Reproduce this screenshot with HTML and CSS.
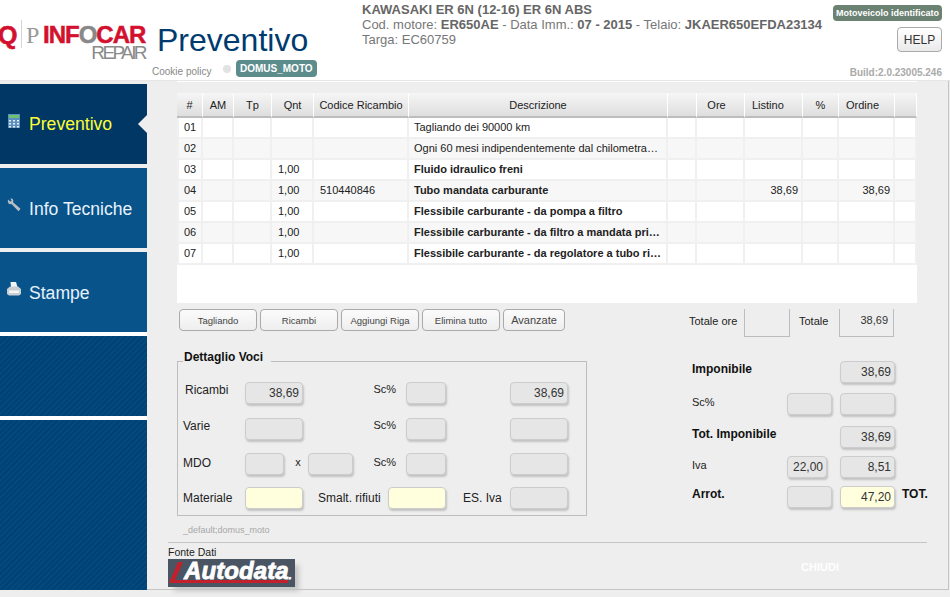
FILE: index.html
```html
<!DOCTYPE html>
<html lang="it">
<head>
    <meta charset="UTF-8">
    <title>Preventivo</title>
    <link rel="stylesheet" href="styles.css">
</head>
<body>
    <div class="page">
        <header class="header">
            <div class="brand">
                <div class="brand-top">
                    <div class="logo">
                        <div class="logo-main">
                            <span class="logo-q">Q</span>
                            <span class="logo-sep"></span>
                            <span class="logo-p">P</span>
                            <span class="logo-infocar">INF<span class="logo-o">O</span>CAR</span>
                        </div>
                        <div class="logo-repair">REPAIR</div>
                    </div>
                    <div class="page-title">Preventivo</div>
                </div>
                <div class="brand-sub">
                    <a class="cookie">Cookie policy</a>
                    <span class="dot"></span>
                    <span class="domus">DOMUS_MOTO</span>
                </div>
            </div>
            <div class="vehicle">
                <div><b>KAWASAKI ER 6N (12-16) ER 6N ABS</b></div>
                <div>Cod. motore: <b>ER650AE</b> - Data Imm.: <b>07 - 2015</b> - Telaio: <b>JKAER650EFDA23134</b></div>
                <div>Targa: EC60759</div>
            </div>
            <div class="status">
                <span class="identified">Motoveicolo identificato</span>
                <button class="help">HELP</button>
                <span class="build">Build:2.0.23005.246</span>
            </div>
        </header>

        <div class="body">
            <nav class="sidebar">
                <a class="menu-item active">
                    <svg class="menu-icon" viewBox="0 0 14 14">
                        <rect x="1" y="0" width="12" height="14" fill="#5b8fc0"/>
                        <rect x="2" y="1" width="10" height="3" fill="#6fc06a"/>
                        <path d="M2 6h2v1.5H2zM6 6h2v1.5H6zM10 6h2v1.5h-2zM2 9h2v1.5H2zM6 9h2v1.5H6zM10 9h2v1.5h-2zM2 12h2v1.5H2zM6 12h2v1.5H6zM10 12h2v1.5h-2z" fill="#e6eef6"/>
                    </svg>
                    <span>Preventivo</span>
                </a>
                <a class="menu-item">
                    <svg class="menu-icon" viewBox="0 0 14 14">
                        <path d="M1 1.5 3.2 3.6 4.6 2.8 3.4.6C5 .1 6.500 1 6.300 3L6 4.200 13.500 10.800 11.500 13.300 4.500 6 3 6.200C1.200 6 .4 3.500 1 1.500z" fill="#b9bec2"/>
                    </svg>
                    <span>Info Tecniche</span>
                </a>
                <a class="menu-item">
                    <svg class="menu-icon" viewBox="0 0 14 14">
                        <path d="M3.500 0 9 0 10.500 5 4 5z" fill="#f2f4f5"/>
                        <path d="M0 7 3 4.500H11L14 7V12L12 13.500H2L0 12z" fill="#c9ced2"/>
                        <rect x="2" y="8.500" width="10" height="2.500" fill="#f4f5f6"/>
                    </svg>
                    <span>Stampe</span>
                </a>
                <div class="menu-empty"></div>
                <div class="menu-empty menu-last"></div>
            </nav>

            <main class="content">
                <section class="grid-panel">
                    <table class="grid">
                        <colgroup>
                            <col class="c-num"><col class="c-am"><col class="c-tp"><col class="c-qnt"><col class="c-code">
                            <col class="c-desc"><col class="c-blank"><col class="c-ore"><col class="c-list"><col class="c-perc">
                            <col class="c-ord"><col class="c-last">
                        </colgroup>
                        <thead>
                            <tr>
                                <th>#</th><th>AM</th><th>Tp</th><th>Qnt</th><th>Codice Ricambio</th><th>Descrizione</th>
                                <th></th><th class="th-ore">Ore</th><th class="th-left">Listino</th><th>%</th><th class="th-left">Ordine</th><th></th>
                            </tr>
                        </thead>
                        <tbody>
                            <tr><td class="num">01</td><td></td><td></td><td></td><td></td><td class="desc">Tagliando dei 90000 km</td><td></td><td></td><td></td><td></td><td></td><td></td></tr>
                            <tr><td class="num">02</td><td></td><td></td><td></td><td></td><td class="desc">Ogni 60 mesi indipendentemente dal chilometraggio percorso</td><td></td><td></td><td></td><td></td><td></td><td></td></tr>
                            <tr class="part"><td class="num">03</td><td></td><td></td><td>1,00</td><td></td><td class="desc">Fluido idraulico freni</td><td></td><td></td><td></td><td></td><td></td><td></td></tr>
                            <tr class="part"><td class="num">04</td><td></td><td></td><td>1,00</td><td>510440846</td><td class="desc">Tubo mandata carburante</td><td></td><td></td><td class="money">38,69</td><td></td><td class="money">38,69</td><td></td></tr>
                            <tr class="part"><td class="num">05</td><td></td><td></td><td>1,00</td><td></td><td class="desc">Flessibile carburante - da pompa a filtro</td><td></td><td></td><td></td><td></td><td></td><td></td></tr>
                            <tr class="part"><td class="num">06</td><td></td><td></td><td>1,00</td><td></td><td class="desc">Flessibile carburante - da filtro a mandata principale</td><td></td><td></td><td></td><td></td><td></td><td></td></tr>
                            <tr class="part"><td class="num">07</td><td></td><td></td><td>1,00</td><td></td><td class="desc">Flessibile carburante - da regolatore a tubo ritorno</td><td></td><td></td><td></td><td></td><td></td><td></td></tr>
                        </tbody>
                    </table>
                </section>

                <section class="actions">
                    <div class="buttons">
                        <button class="btn">Tagliando</button>
                        <button class="btn">Ricambi</button>
                        <button class="btn">Aggiungi Riga</button>
                        <button class="btn">Elimina tutto</button>
                        <button class="btn btn-adv">Avanzate</button>
                    </div>
                    <div class="totals">
                        <span class="totals-label">Totale ore</span>
                        <div class="totals-box box-ore"></div>
                        <span class="totals-label label-tot">Totale</span>
                        <div class="totals-box box-tot">38,69</div>
                    </div>
                </section>

                <section class="lower">
                    <fieldset class="detail">
                        <legend>Dettaglio Voci</legend>
                        <div class="detail-grid">
                            <label class="lbl lbl-high lbl-ricambi">Ricambi</label>
                            <input class="field f-wide" readonly value="38,69">
                            <label class="lbl-sc">Sc%</label>
                            <input class="field f-sc" readonly>
                            <input class="field f-end" readonly value="38,69">

                            <label class="lbl lbl-high">Varie</label>
                            <input class="field f-wide" readonly>
                            <label class="lbl-sc">Sc%</label>
                            <input class="field f-sc" readonly>
                            <input class="field f-end" readonly>

                            <label class="lbl lbl-mdo">MDO</label>
                            <div class="mdo">
                                <input class="field f-hours" readonly>
                                <span class="times">x</span>
                                <input class="field f-rate" readonly>
                            </div>
                            <label class="lbl-sc lbl-sc-low">Sc%</label>
                            <input class="field f-sc" readonly>
                            <input class="field f-end" readonly>

                            <label class="lbl">Materiale</label>
                            <input class="field field-edit f-wide" readonly>
                            <label class="lbl lbl-smalt">Smalt. rifiuti</label>
                            <input class="field field-edit f-smalt" readonly>
                            <label class="lbl lbl-es">ES. Iva</label>
                            <input class="field f-end" readonly>
                        </div>
                    </fieldset>

                    <div class="summary">
                        <span class="sum-bold">Imponibile</span>
                        <input class="field f-total" readonly value="38,69">

                        <span class="sum-small">Sc%</span>
                        <input class="field f-mid" readonly>
                        <input class="field f-total" readonly>

                        <span class="sum-bold">Tot. Imponibile</span>
                        <input class="field f-total" readonly value="38,69">

                        <span class="sum-small">Iva</span>
                        <input class="field f-iva" readonly value="22,00">
                        <input class="field f-total" readonly value="8,51">

                        <span class="sum-bold">Arrot.</span>
                        <input class="field f-mid" readonly>
                        <input class="field field-edit f-total" readonly value="47,20">
                        <span class="sum-tot">TOT.</span>
                    </div>
                </section>

                <div class="profile-note">_default;domus_moto</div>

                <footer class="footer">
                    <div class="source">
                        <div class="source-label">Fonte Dati</div>
                        <div class="autodata">
                            <svg class="autodata-red" viewBox="0 0 127 28">
                                <path d="M10 3H15L7 21H120V24H1z" fill="#c2202c"/>
                            </svg>
                            <span class="autodata-text">Autodata<i>.</i></span>
                        </div>
                    </div>
                    <a class="close">CHIUDI</a>
                </footer>
            </main>
        </div>
    </div>
</body>
</html>
```

FILE: styles.css
```css
* {
    box-sizing: border-box;
}

html, body {
    margin: 0;
    padding: 0;
    height: 100%;
    overflow: hidden;
}

body {
    font-family: "Liberation Sans", Arial, sans-serif;
    font-size: 11px;
    color: #222;
    background: #eeeeee;
}

.page {
    width: 950px;
    height: 597px;
    display: flex;
    flex-direction: column;
}

/* header */
.header {
    height: 81px;
    flex: none;
    display: flex;
    background: #fff;
    border-bottom: 1px solid #e6e6e6;
}

.brand {
    flex: 0 0 362px;
    overflow: hidden;
}

.brand-top {
    height: 60px;
    display: flex;
    padding-top: 20px;
}

.logo {
    width: 147px;
    flex: none;
}

.logo-main {
    display: flex;
    align-items: flex-start;
    height: 25px;
    line-height: 20px;
}

.logo-q {
    width: 21px;
    margin-left: -2px;
    margin-top: 5px;
    font-size: 25px;
    font-weight: bold;
    color: #d3112e;
    -webkit-text-stroke: 0.6px #d3112e;
}

.logo-sep {
    width: 1px;
    height: 28px;
    margin-left: 2px;
    background: #d4d4d4;
}

.logo-p {
    width: 17px;
    margin-left: 4px;
    margin-top: 5px;
    font-family: "Liberation Serif", serif;
    font-size: 24px;
    color: #999;
}

.logo-infocar {
    margin-top: 5px;
    font-size: 24px;
    font-weight: bold;
    letter-spacing: -1px;
    color: #d3112e;
    -webkit-text-stroke: 0.5px #d3112e;
}

.logo-o {
    color: #888;
    -webkit-text-stroke: 0.5px #888;
}

.logo-repair {
    text-align: right;
    font-size: 19px;
    line-height: 15px;
    letter-spacing: -2.6px;
    color: #8a8a8a;
    padding-right: 2px;
}

.page-title {
    margin-left: 10px;
    font-size: 32px;
    line-height: 40px;
    color: #003b6f;
}

.brand-sub {
    display: flex;
    align-items: center;
    height: 17px;
    padding-left: 152px;
}

.cookie {
    width: 71px;
    padding-top: 5px;
    font-size: 10px;
    color: #888;
}

.dot {
    width: 8px;
    height: 8px;
    margin-right: 5px;
    border-radius: 50%;
    background: #e2e2e2;
}

.domus {
    height: 17px;
    padding: 0 4px;
    line-height: 17px;
    font-size: 10px;
    font-weight: bold;
    color: #fff;
    background: #5c8c8c;
    border-radius: 4px;
}

.vehicle {
    flex: 1;
    padding-top: 2px;
    font-size: 13px;
    line-height: 15px;
    white-space: nowrap;
    color: #777;
}

.vehicle b {
    color: #666;
}

.status {
    flex: none;
    display: flex;
    flex-direction: column;
    align-items: flex-end;
    padding: 5px 8px 0 0;
}

.identified {
    height: 16px;
    padding: 0 3px;
    line-height: 16px;
    font-size: 9px;
    font-weight: bold;
    color: #fff;
    background: #6b8272;
    border-radius: 4px;
}

.help {
    width: 45px;
    height: 25px;
    margin-top: 6px;
    padding: 0;
    font-family: inherit;
    font-size: 12px;
    color: #333;
    background: linear-gradient(#fff, #eaeaea);
    border: 1px solid #aaa;
    border-radius: 4px;
}

.build {
    margin-top: 15px;
    font-size: 10px;
    font-weight: bold;
    color: #aaa;
}

/* sidebar */
.body {
    flex: 1;
    display: flex;
    min-height: 0;
}

.sidebar {
    flex: 0 0 147px;
    display: flex;
    flex-direction: column;
    gap: 4px;
    height: 509px;
    padding-top: 3px;
}

.menu-item {
    position: relative;
    height: 80px;
    flex: none;
    display: flex;
    align-items: center;
    gap: 8px;
    padding-left: 7px;
    font-size: 17.6px;
    color: #e6f2fc;
    background: #09538b;
}

.menu-item span {
    padding-top: 2px;
}

.menu-item.active span {
    padding-top: 0;
}

.menu-item.active {
    color: #ffff33;
    background: #003764;
}

.menu-item.active::after {
    content: "";
    position: absolute;
    right: 0;
    top: 31px;
    border: 9px solid transparent;
    border-left: 0;
    border-right-color: #eeeeee;
}

.menu-icon {
    width: 14px;
    height: 14px;
    flex: none;
    margin-bottom: 6px;
}

.menu-empty {
    height: 84px;
    flex: none;
    margin-top: -4px;
    border-top: 4px solid #fff;
    background: repeating-linear-gradient(135deg, #004273 0, #004273 2px, #03497d 2px, #03497d 4px);
}

.menu-last {
    flex: 1;
}

/* main area */
.content {
    flex: 1;
    display: flex;
    flex-direction: column;
    height: 509px;
    margin-right: 1px;
    padding-left: 21px;
    border-right: 1px solid #c4c4c4;
    border-bottom: 1px solid #c4c4c4;
}

.grid-panel {
    width: 740px;
    height: 222px;
    flex: none;
    margin-left: 9px;
    padding-top: 11px;
    border-top: 1px solid #fff;
    background: linear-gradient(#eeeeee 11px, #fff 11px);
}

.grid {
    width: 740px;
    table-layout: fixed;
    border-collapse: separate;
    border-spacing: 0;
}

.c-num { width: 26px; }
.c-am { width: 31px; }
.c-tp { width: 38px; }
.c-qnt { width: 42px; }
.c-code { width: 95px; }
.c-desc { width: 259px; }
.c-blank { width: 29px; }
.c-ore { width: 48px; }
.c-list { width: 58px; }
.c-perc { width: 36px; }
.c-ord { width: 56px; }
.c-last { width: 22px; }

.grid th {
    height: 25px;
    padding: 0;
    font-weight: normal;
    color: #222;
    background: linear-gradient(#f6f6f6, #dedede);
    border-right: 1px solid #fff;
    border-bottom: 2px solid #bdbdbd;
}

.grid th.th-ore {
    padding-right: 8px;
}

.grid th.th-left {
    padding-left: 7px;
    text-align: left;
}

.grid td {
    height: 21px;
    padding: 0 0 1px 6px;
    white-space: nowrap;
    overflow: hidden;
    background: #fff;
    border-right: 2px solid #f0f0f0;
    border-bottom: 2px solid #f0f0f0;
}

.grid tbody tr:nth-child(even) td {
    background: #f7f7f7;
}

.grid td.num {
    padding: 0 0 1px 5px;
    border-left: 2px solid #f0f0f0;
}

.grid td.desc {
    padding: 0 3px 1px 5px;
    text-overflow: ellipsis;
}

.grid .part .desc {
    font-weight: bold;
}

.grid td.money {
    padding: 0 3px 1px 0;
    text-align: right;
}

.actions {
    display: flex;
    flex: none;
    width: 715px;
    height: 28px;
    margin: 6px 0 0 11px;
    justify-content: space-between;
}

.buttons {
    display: flex;
    gap: 3px;
}

.btn {
    width: 78px;
    height: 22px;
    padding: 0;
    font-family: inherit;
    font-size: 9.5px;
    color: #444;
    background: linear-gradient(#fbfbfb, #eeeeee);
    border: 1px solid #aaa;
    border-radius: 4px;
}

.btn-adv {
    width: 62px;
    font-size: 11px;
}

.totals {
    display: flex;
    height: 28px;
}

.totals-label {
    width: 55px;
    padding-top: 6px;
    font-size: 11px;
    color: #222;
}

.label-tot {
    width: 49px;
    padding-left: 9px;
}

.totals-box {
    border: 1px solid #bdbdbd;
    border-top: 0;
}

.box-ore {
    width: 46px;
}

.box-tot {
    width: 55px;
    padding: 5px 5px 0 0;
    text-align: right;
    color: #333;
}

.lower {
    display: flex;
    flex: none;
    margin: 13px 0 0 9px;
}

.detail {
    width: 410px;
    margin: 0;
    padding: 10px 0 5px;
    border: 1px solid #bdbdbd;
}

.detail legend {
    margin-left: 5px;
    padding: 0 8px 8px 1px;
    font-size: 12px;
    line-height: 14px;
    font-weight: bold;
    color: #111;
}

.detail-grid {
    display: grid;
    grid-template-columns: 67px 58px 85px 18px 40px 64px 58px;
    grid-template-rows: 36px 35px 34px 23px;
}

.field {
    width: 100%;
    height: 22px;
    padding: 0 3px;
    text-align: right;
    font-family: inherit;
    font-size: 12px;
    color: #333;
    background: #e6e6e6;
    border: 1px solid #ccc;
    border-radius: 4px;
    box-shadow: 1px 2px 2px #c2c2c2;
    outline: none;
}

.field-edit {
    background: #ffffdd;
}

.lbl {
    font-size: 12px;
    line-height: 22px;
    padding-left: 5px;
}

.lbl-high {
    line-height: 17px;
}

.lbl-mdo {
    line-height: 20px;
}

.lbl-ricambi {
    padding-left: 7px;
}

.lbl-sc {
    grid-column: 3 / span 2;
    padding-right: 10px;
    text-align: right;
    font-size: 11px;
    line-height: 15px;
}

.lbl-sc-low {
    padding-top: 2px;
}

.f-wide { grid-column: 2; }
.f-sc { grid-column: 5; }
.f-end { grid-column: 7; }

.mdo {
    grid-column: 2;
    display: flex;
    width: 108px;
}

.f-hours {
    width: 39px;
}

.f-rate {
    width: 45px;
}

.times {
    width: 24px;
    padding-left: 4px;
    text-align: center;
    line-height: 18px;
}

.lbl-smalt {
    grid-column: 3;
    padding-left: 15px;
}

.f-smalt {
    grid-column: 4 / span 2;
}

.lbl-es {
    grid-column: 6;
    padding-left: 17px;
}

.summary {
    display: grid;
    grid-template-columns: 87px 45px 55px auto;
    grid-template-rows: 32px 33px 30px 30px 22px;
    column-gap: 8px;
    margin: 11px 0 0 105px;
    height: 147px;
}

.summary .f-total {
    grid-column: 3;
}

.f-iva {
    width: 40px;
}

.sum-bold {
    grid-column: 1;
    padding-top: 1px;
    font-size: 12px;
    line-height: 15px;
    font-weight: bold;
    white-space: nowrap;
    color: #111;
}

.sum-small {
    grid-column: 1;
    padding-top: 2px;
    font-size: 11px;
    line-height: 15px;
}

.sum-tot {
    grid-column: 4;
    margin-left: -1px;
    padding-top: 1px;
    font-size: 12px;
    line-height: 15px;
    font-weight: bold;
    color: #111;
}

.profile-note {
    flex: none;
    margin: 8px 0 0 15px;
    font-size: 9px;
    line-height: 12px;
    color: #a8a8a8;
}

/* footer */
.footer {
    flex: none;
    display: flex;
    justify-content: space-between;
    width: 759px;
    margin-top: 6px;
    border-top: 1px solid #c4c4c4;
}

.source-label {
    margin-top: 3px;
    font-size: 10.5px;
    line-height: 13px;
}

.autodata {
    position: relative;
    width: 127px;
    height: 28px;
    background: #4a5563;
    box-shadow: 5px 5px 5px -1px #c4c4c4;
}

.autodata-red {
    position: absolute;
    left: 0;
    top: 0;
    width: 127px;
    height: 28px;
}

.autodata-text {
    position: absolute;
    left: 16px;
    top: -1px;
    font-size: 24px;
    line-height: 26px;
    font-weight: bold;
    font-style: italic;
    letter-spacing: 0.1px;
    color: #fff;
    -webkit-text-stroke: 0.8px #fff;
}

.autodata-text i {
    font-size: 10px;
}

.close {
    margin: 18px 88px 0 0;
    font-size: 11px;
    font-weight: bold;
    color: #fff;
}
```
